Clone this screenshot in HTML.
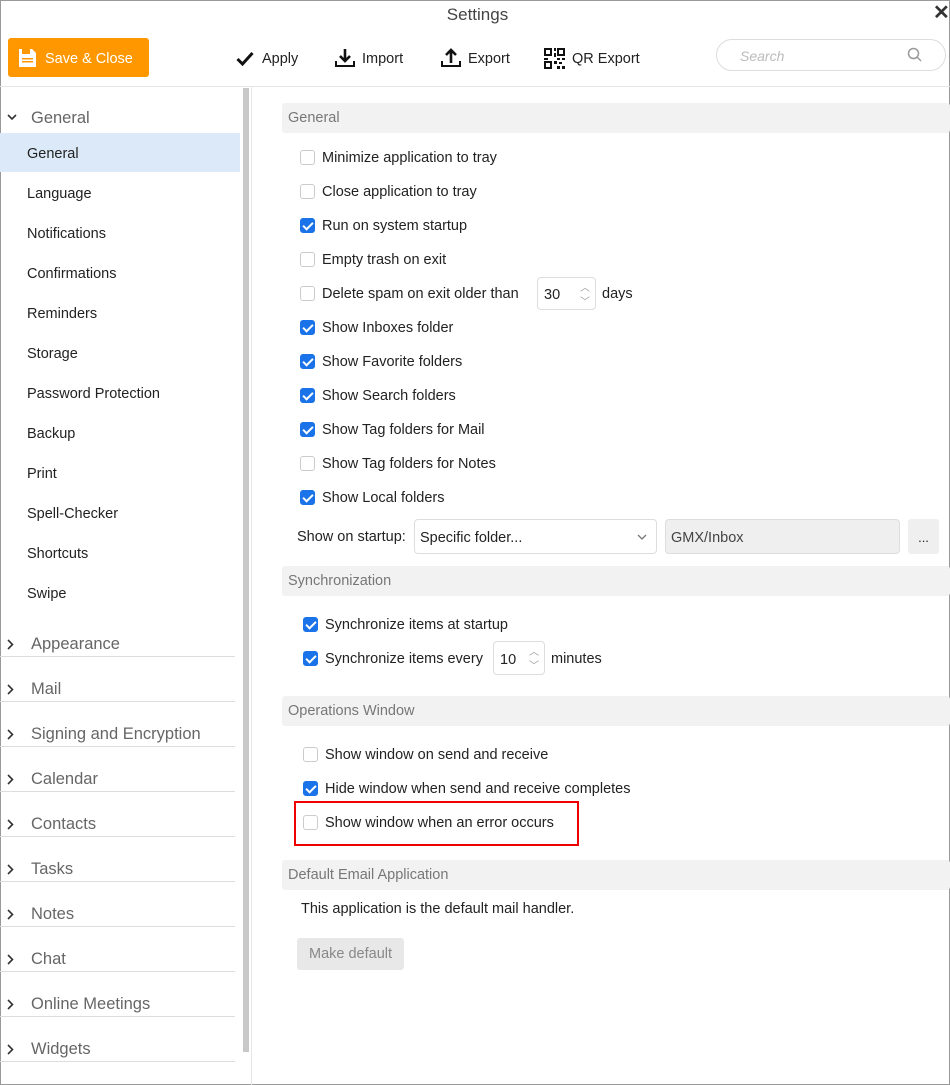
<!DOCTYPE html>
<html><head><style>
body{margin:0;width:950px;height:1085px;position:relative;background:#fff;font-family:"Liberation Sans",sans-serif;color:#222;overflow:hidden}
.a{position:absolute;white-space:nowrap}
.t{font-size:14.5px}
.cb{position:absolute;width:15px;height:15px;border:1px solid #ccc;border-radius:3px;background:#fff;box-sizing:border-box}
.cb.on{background:#1a73e8;border-color:#1a73e8}
.cb.on:after{content:"";position:absolute;left:4px;top:1px;width:4px;height:8px;border:solid #fff;border-width:0 2px 2px 0;transform:rotate(45deg)}
.hdr{position:absolute;left:282px;width:668px;height:30px;background:#f2f2f2;border-radius:3px;color:#777;font-size:14.5px;line-height:31px;padding-left:6px;box-sizing:border-box}
.si{position:absolute;left:27px;font-size:14.5px}
.grp{position:absolute;left:0;width:235px;height:45px;border-bottom:1px solid #ddd;font-size:16.5px;color:#666}
.grp span{position:absolute;left:31px;top:24px}
.grp svg{position:absolute;left:7px;top:28px}
</style></head><body>
<div class="a" style="left:0;top:0;width:948px;height:1083px;border:1px solid #999"></div>
<div class="a" style="left:0;top:5px;width:955px;text-align:center;font-size:17px;color:#444">Settings</div>
<div class="a" style="left:933px;top:0;font-size:20px;font-weight:bold;color:#333">✕</div>
<div class="a" style="left:8px;top:38px;width:141px;height:39px;background:#ff9800;border-radius:3px;color:#fff;font-size:14.5px">
<svg style="position:absolute;left:11px;top:11px" width="17" height="18" viewBox="0 0 17 18"><path d="M0 0h13l4 4v14H0z" fill="#fff"/><rect x="3" y="0" width="8" height="5" fill="#ff9800"/><rect x="3" y="9" width="11" height="1.5" fill="#ff9800"/><rect x="3" y="12" width="11" height="1.5" fill="#ff9800"/></svg>
<span class="a" style="left:37px;top:13px">Save &amp; Close</span></div>
<svg class="a" style="left:236px;top:51px" width="18" height="15" viewBox="0 0 18 15"><path d="M1.5 8l5 5L16.5 2" stroke="#111" stroke-width="3" fill="none"/></svg>
<div class="a t" style="left:262px;top:51px">Apply</div>
<svg class="a" style="left:335px;top:48px" width="20" height="20" viewBox="0 0 20 20"><path d="M10 1v11M5 8l5 5 5-5" stroke="#111" stroke-width="2.6" fill="none"/><path d="M1 13v5h18v-5" stroke="#111" stroke-width="2" fill="none"/></svg>
<div class="a t" style="left:362px;top:51px">Import</div>
<svg class="a" style="left:441px;top:47px" width="20" height="21" viewBox="0 0 20 21"><path d="M10 16V4M5 8l5-5 5 5" stroke="#111" stroke-width="2.6" fill="none"/><path d="M1 14v5h18v-5" stroke="#111" stroke-width="2" fill="none"/></svg>
<div class="a t" style="left:468px;top:51px">Export</div>
<svg class="a" style="left:544px;top:48px" width="21" height="21" viewBox="0 0 21 21" fill="#111"><path d="M0 0h8v8H0zM2 2v4h4V2zM13 0h8v8h-8zm2 2v4h4V2zM0 13h8v8H0zm2 2v4h4v-4zM10 0h2v3h-2zM10 5h2v4h-2zM13 10h3v2h-3zM10 13h3v3h-3zM15 14h3v2h-3zM18 18h3v3h-3zM13 18h3v3h-3zM0 10h4v2H0zM18 10h3v2h-3z"/></svg>
<div class="a t" style="left:572px;top:51px">QR Export</div>
<div class="a" style="left:716px;top:39px;width:230px;height:32px;border:1px solid #ddd;border-radius:16px;box-sizing:border-box"><span class="a" style="left:23px;top:8px;font-size:14px;color:#bbb;font-style:italic">Search</span>
<svg class="a" style="left:190px;top:7px" width="16" height="16" viewBox="0 0 16 16"><circle cx="6.5" cy="6.5" r="5" stroke="#999" stroke-width="1.5" fill="none"/><path d="M10 10l4 4" stroke="#999" stroke-width="1.5"/></svg></div>
<div class="a" style="left:0;top:86px;width:950px;height:1px;background:#e6e6e6"></div>
<div class="a" style="left:243px;top:88px;width:6px;height:964px;background:#c8c8c8"></div>
<div class="a" style="left:251px;top:87px;width:1px;height:998px;background:#e6e6e6"></div>
<svg class="a" style="left:7px;top:114px" width="10" height="7" viewBox="0 0 10 7"><path d="M1 1l4 4 4-4" stroke="#333" stroke-width="1.6" fill="none"/></svg>
<div class="a" style="left:31px;top:109px;font-size:16.5px;color:#666">General</div>
<div class="a" style="left:0;top:133px;width:240px;height:39px;background:#dce9f8"></div>
<div class="si" style="top:146px">General</div>
<div class="si" style="top:186px">Language</div>
<div class="si" style="top:226px">Notifications</div>
<div class="si" style="top:266px">Confirmations</div>
<div class="si" style="top:306px">Reminders</div>
<div class="si" style="top:346px">Storage</div>
<div class="si" style="top:386px">Password Protection</div>
<div class="si" style="top:426px">Backup</div>
<div class="si" style="top:466px">Print</div>
<div class="si" style="top:506px">Spell-Checker</div>
<div class="si" style="top:546px">Shortcuts</div>
<div class="si" style="top:586px">Swipe</div>
<div class="grp" style="top:611px"><svg width="7" height="11" viewBox="0 0 7 11"><path d="M1 1l4.5 4.5L1 10" stroke="#333" stroke-width="1.6" fill="none"/></svg><span>Appearance</span></div>
<div class="grp" style="top:656px"><svg width="7" height="11" viewBox="0 0 7 11"><path d="M1 1l4.5 4.5L1 10" stroke="#333" stroke-width="1.6" fill="none"/></svg><span>Mail</span></div>
<div class="grp" style="top:701px"><svg width="7" height="11" viewBox="0 0 7 11"><path d="M1 1l4.5 4.5L1 10" stroke="#333" stroke-width="1.6" fill="none"/></svg><span>Signing and Encryption</span></div>
<div class="grp" style="top:746px"><svg width="7" height="11" viewBox="0 0 7 11"><path d="M1 1l4.5 4.5L1 10" stroke="#333" stroke-width="1.6" fill="none"/></svg><span>Calendar</span></div>
<div class="grp" style="top:791px"><svg width="7" height="11" viewBox="0 0 7 11"><path d="M1 1l4.5 4.5L1 10" stroke="#333" stroke-width="1.6" fill="none"/></svg><span>Contacts</span></div>
<div class="grp" style="top:836px"><svg width="7" height="11" viewBox="0 0 7 11"><path d="M1 1l4.5 4.5L1 10" stroke="#333" stroke-width="1.6" fill="none"/></svg><span>Tasks</span></div>
<div class="grp" style="top:881px"><svg width="7" height="11" viewBox="0 0 7 11"><path d="M1 1l4.5 4.5L1 10" stroke="#333" stroke-width="1.6" fill="none"/></svg><span>Notes</span></div>
<div class="grp" style="top:926px"><svg width="7" height="11" viewBox="0 0 7 11"><path d="M1 1l4.5 4.5L1 10" stroke="#333" stroke-width="1.6" fill="none"/></svg><span>Chat</span></div>
<div class="grp" style="top:971px"><svg width="7" height="11" viewBox="0 0 7 11"><path d="M1 1l4.5 4.5L1 10" stroke="#333" stroke-width="1.6" fill="none"/></svg><span>Online Meetings</span></div>
<div class="grp" style="top:1016px"><svg width="7" height="11" viewBox="0 0 7 11"><path d="M1 1l4.5 4.5L1 10" stroke="#333" stroke-width="1.6" fill="none"/></svg><span>Widgets</span></div>

<div class="hdr" style="top:103px">General</div>
<div class="cb" style="left:300px;top:150px"></div><div class="a t" style="left:322px;top:150px">Minimize application to tray</div>
<div class="cb" style="left:300px;top:184px"></div><div class="a t" style="left:322px;top:184px">Close application to tray</div>
<div class="cb on" style="left:300px;top:218px"></div><div class="a t" style="left:322px;top:218px">Run on system startup</div>
<div class="cb" style="left:300px;top:252px"></div><div class="a t" style="left:322px;top:252px">Empty trash on exit</div>
<div class="cb" style="left:300px;top:286px"></div><div class="a t" style="left:322px;top:286px">Delete spam on exit older than</div>
<div class="a" style="left:537px;top:277px;width:59px;height:33px;border:1px solid #ddd;border-radius:4px;box-sizing:border-box"><span class="a t" style="left:6px;top:9px">30</span><span class="a" style="left:42px;top:1px;font-size:10px;color:#999">︿</span><span class="a" style="left:42px;top:15px;font-size:10px;color:#999">﹀</span></div>
<div class="a t" style="left:602px;top:286px">days</div>
<div class="cb on" style="left:300px;top:320px"></div><div class="a t" style="left:322px;top:320px">Show Inboxes folder</div>
<div class="cb on" style="left:300px;top:354px"></div><div class="a t" style="left:322px;top:354px">Show Favorite folders</div>
<div class="cb on" style="left:300px;top:388px"></div><div class="a t" style="left:322px;top:388px">Show Search folders</div>
<div class="cb on" style="left:300px;top:422px"></div><div class="a t" style="left:322px;top:422px">Show Tag folders for Mail</div>
<div class="cb" style="left:300px;top:456px"></div><div class="a t" style="left:322px;top:456px">Show Tag folders for Notes</div>
<div class="cb on" style="left:300px;top:490px"></div><div class="a t" style="left:322px;top:490px">Show Local folders</div>
<div class="a t" style="left:297px;top:529px">Show on startup:</div>
<div class="a" style="left:414px;top:519px;width:243px;height:35px;border:1px solid #ddd;border-radius:4px;box-sizing:border-box"><span class="a t" style="left:5px;top:10px">Specific folder...</span><svg class="a" style="left:222px;top:14px" width="10" height="7" viewBox="0 0 10 7"><path d="M1 1l4 4 4-4" stroke="#777" stroke-width="1.3" fill="none"/></svg></div>
<div class="a" style="left:665px;top:519px;width:235px;height:35px;background:#efefef;border:1px solid #ddd;border-radius:4px;box-sizing:border-box"><span class="a t" style="left:5px;top:10px;color:#444">GMX/Inbox</span></div>
<div class="a" style="left:908px;top:519px;width:31px;height:35px;background:#efefef;border-radius:3px;text-align:center;line-height:38px;font-size:13px">...</div>

<div class="hdr" style="top:566px">Synchronization</div>
<div class="cb on" style="left:303px;top:617px"></div><div class="a t" style="left:325px;top:617px">Synchronize items at startup</div>
<div class="cb on" style="left:303px;top:651px"></div><div class="a t" style="left:325px;top:651px">Synchronize items every</div>
<div class="a" style="left:493px;top:641px;width:52px;height:34px;border:1px solid #ddd;border-radius:4px;box-sizing:border-box"><span class="a t" style="left:6px;top:10px">10</span><span class="a" style="left:35px;top:1px;font-size:10px;color:#999">︿</span><span class="a" style="left:35px;top:15px;font-size:10px;color:#999">﹀</span></div>
<div class="a t" style="left:551px;top:651px">minutes</div>

<div class="hdr" style="top:696px">Operations Window</div>
<div class="cb" style="left:303px;top:747px"></div><div class="a t" style="left:325px;top:747px">Show window on send and receive</div>
<div class="cb on" style="left:303px;top:781px"></div><div class="a t" style="left:325px;top:781px">Hide window when send and receive completes</div>
<div class="a" style="left:294px;top:801px;width:285px;height:45px;border:2px solid #e00;box-sizing:border-box"></div>
<div class="cb" style="left:303px;top:815px"></div><div class="a t" style="left:325px;top:815px">Show window when an error occurs</div>

<div class="hdr" style="top:860px">Default Email Application</div>
<div class="a t" style="left:301px;top:901px">This application is the default mail handler.</div>
<div class="a" style="left:297px;top:938px;width:107px;height:32px;background:#e8e8e8;border-radius:3px;color:#888;font-size:14.5px;line-height:33px;text-align:center">Make default</div>
</body></html>
